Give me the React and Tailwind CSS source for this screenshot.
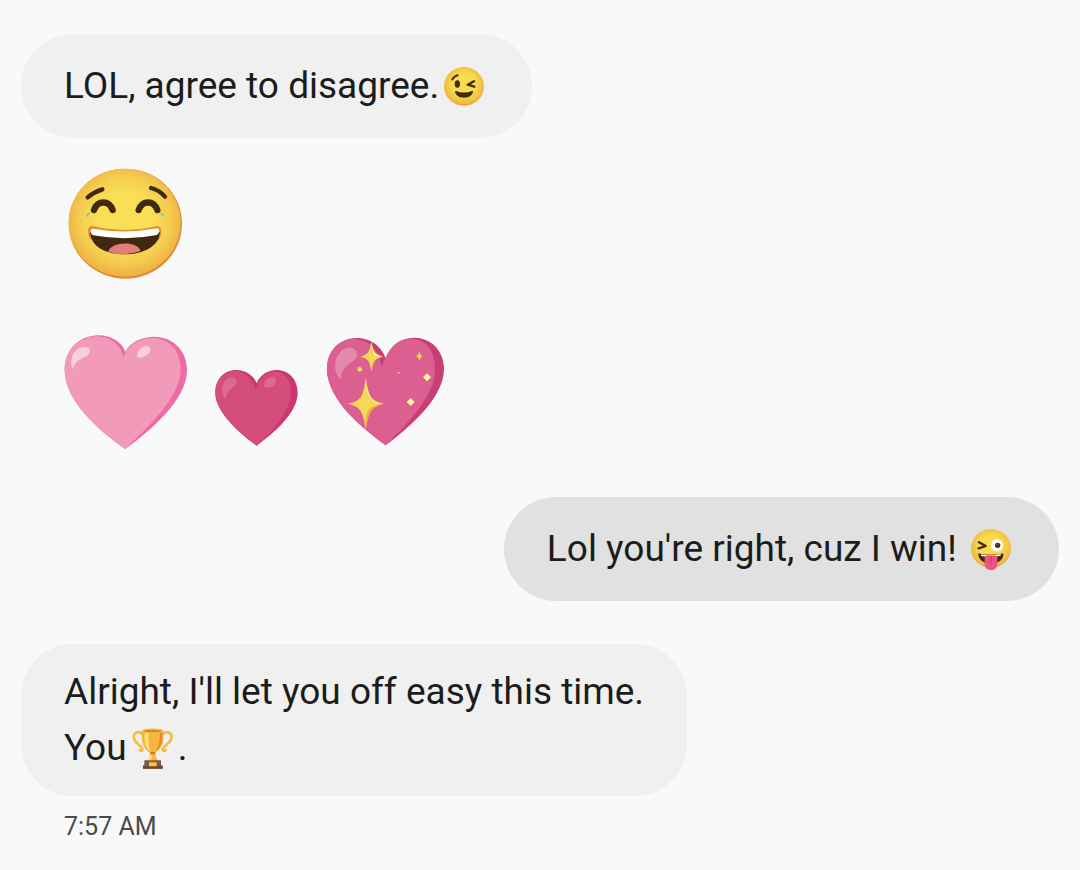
const messages = [
  { id: 1, from: "them", lines: [["LOL, agree to disagree.", <WinkFace key="e" />]] },
  { id: 2, from: "me", lines: [["Lol you're right, cuz I win! ", <ZanyFace key="e" />]] },
  { id: 3, from: "them", lines: [["Alright, I'll let you off easy this time."], ["You ", <Trophy key="e" />, "."]] },
];

export default function App() {
  return (
    <main className="flex min-h-screen flex-col bg-[#f9f9f9] px-[21px] pt-[34px] pb-6 font-[Roboto,sans-serif] text-[#1c1c1c]">
      <Bubble message={messages[0]} />

      <div className="mt-[30px] px-[47px]">
        <LaughFace />
      </div>
      <div className="mt-[54px] flex items-end gap-[27px] px-[43px]">
        <PinkHeart />
        <SmallHeart />
        <SparklingHeart />
      </div>

      <div className="mt-[47px] flex flex-col">
        <Bubble message={messages[1]} />
      </div>
      <div className="mt-[43px] flex flex-col">
        <Bubble message={messages[2]} />
      </div>
      <time className="mt-[13px] px-[43px] text-[25px] leading-9 text-[#4a4a4a]">7:57 AM</time>
    </main>
  );
}

function Bubble({ message }) {
  const side = message.from === "me" ? "self-end bg-[#e1e1e1]" : "self-start bg-[#f0f0f0]";
  const padding = message.lines.length > 1 ? "py-5" : "py-6";

  return (
    <div className={`rounded-[52px] px-[43px] text-[37px] leading-14 ${side} ${padding}`}>
      {message.lines.map((line, i) => (
        <p key={i} className="flex items-center whitespace-pre">{line}</p>
      ))}
    </div>
  );
}

function WinkFace() {
  return (
    <svg role="img" aria-label="winking face" viewBox="21 30 126 120" className="mx-1 h-10 w-[42px]">
      <defs>
        <radialGradient id="wink" cx="0.5" cy="0.45" r="0.55">
          <stop offset="0.5" stopColor="#f8dc50" />
          <stop offset="0.88" stopColor="#f1bd42" />
          <stop offset="1" stopColor="#e59c38" />
        </radialGradient>
      </defs>
      <ellipse cx="84" cy="91" rx="60" ry="58" fill="url(#wink)" />
      <ellipse cx="64" cy="84" rx="8" ry="11" fill="#422b0d" />
      <path d="M49 70 Q54 61 65 58" fill="none" stroke="#422b0d" strokeWidth="6" strokeLinecap="round" />
      <path d="M114 76 L95 86 L115 92" fill="none" stroke="#422b0d" strokeWidth="7" strokeLinecap="round" strokeLinejoin="round" />
      <path d="M60 105 Q84 114 108 105 C112 104 112 108 110 111 C104 122 95 125 84 125 C73 125 64 122 58 111 C57 107 58 104 60 105Z" fill="#422b0d" />
    </svg>
  );
}

function ZanyFace() {
  return (
    <svg role="img" aria-label="zany face" viewBox="30 30 126 129" className="mx-1 h-[43px] w-[42px]">
      <defs>
        <radialGradient id="zany" cx="0.5" cy="0.45" r="0.55">
          <stop offset="0.5" stopColor="#f8dc50" />
          <stop offset="0.88" stopColor="#f1bd42" />
          <stop offset="1" stopColor="#e59c38" />
        </radialGradient>
      </defs>
      <ellipse cx="93" cy="91" rx="60" ry="58" fill="url(#zany)" />
      <path d="M57 73 L77 84 L56 91" fill="none" stroke="#422b0d" strokeWidth="7" strokeLinecap="round" strokeLinejoin="round" />
      <circle cx="111" cy="82" r="18" fill="#fff" />
      <circle cx="113" cy="82" r="8" fill="#4a2f13" />
      <circle cx="110" cy="79" r="2" fill="#9b806a" />
      <path d="M55 106 Q92 115 130 106 C132 122 119 137 93 137 C68 137 53 122 55 106Z" fill="#422b0d" />
      <path d="M62 109 Q92 115 123 108 L121 113 Q92 120 64 114Z" fill="#fff" />
      <path d="M74 114 Q92 109 112 114 V137 C112 150 104 156 93 156 C82 156 74 150 74 137Z" fill="#ee5285" />
      <path d="M93 116 V136" stroke="#cf3b70" strokeWidth="3" strokeLinecap="round" />
    </svg>
  );
}

function Trophy() {
  return (
    <svg role="img" aria-label="trophy" viewBox="21 24 126 129" className="mr-1 -ml-1 h-[43px] w-[42px]">
      <path d="M56 48 C43 32 23 40 27 58 C30 74 47 77 52 89 C54 96 47 97 44 93 M110 48 C123 32 143 40 139 58 C136 74 119 77 114 89 C112 96 119 97 122 93" fill="none" stroke="#f7bd3c" strokeWidth="8" strokeLinecap="round" />
      <path d="M50 35 H115 C118 67 112 89 91 101 Q90 116 101 127 H65 Q76 116 75 101 C54 89 48 67 50 35Z" fill="#f9b43d" />
      <path d="M60 41 H71 C69 66 71 86 77 97 C61 86 57 67 60 41Z" fill="#fde47d" />
      <path d="M104 41 H112 C113 69 108 87 92 96 C102 82 105 61 104 41Z" fill="#e18b29" />
      <ellipse cx="83" cy="35" rx="33" ry="7" fill="#f9c84b" />
      <ellipse cx="83" cy="36" rx="27" ry="4" fill="#cf882d" />
      <path d="M76 99 H90 L91 106 H75Z" fill="#d87927" />
      <path d="M76 108 H81 Q82 119 75 125 H68 Q76 119 76 108Z" fill="#fde47d" />
      <path d="M58 124 H108 V139 H113 V149 H54 V139 H58Z" fill="#80594b" />
      <path d="M54 142 H113 V149 H54Z" fill="#684337" />
      <rect x="72" y="130" width="23" height="12" rx="2" fill="#fbc53b" />
    </svg>
  );
}

function LaughFace() {
  return (
    <svg role="img" aria-label="laughing face" viewBox="39 24 345 336" className="h-28 w-[115px]">
      <defs>
        <radialGradient id="laugh" cx="0.5" cy="0.47" r="0.54">
          <stop offset="0.45" stopColor="#f8df55" />
          <stop offset="0.72" stopColor="#f5cf50" />
          <stop offset="1" stopColor="#edaf43" />
        </radialGradient>
      </defs>
      <ellipse cx="211" cy="191" rx="170" ry="165" fill="#df8b33" />
      <ellipse cx="209" cy="188" rx="168" ry="162" fill="url(#laugh)" />
      <path d="M98 112 Q117 96 142 88 M288 84 Q314 91 330 110" fill="none" stroke="#3f2912" strokeWidth="13" strokeLinecap="round" />
      <path d="M117 150 C128 120 162 120 173 150 M251 150 C262 120 296 120 307 150" fill="none" stroke="#3f2912" strokeWidth="19" strokeLinecap="round" />
      <path d="M98 168 Q95 163 103 160 M324 168 Q327 164 319 161" fill="none" stroke="#71c5bd" strokeWidth="5" strokeLinecap="round" />
      <path d="M113 199 Q210 221 306 199 C326 199 320 230 311 240 Q210 265 106 238 C94 215 99 195 113 199Z" fill="#df8e32" />
      <path d="M106 216 C106 260 153 283 210 283 C266 283 315 257 314 216 Q210 250 106 216Z" fill="#3f2912" />
      <path d="M160 275 C168 244 247 242 257 273 Q210 291 160 275Z" fill="#e17d78" />
      <path d="M113 206 Q210 223 307 205 C315 206 314 219 306 225 Q210 244 115 226 C106 221 104 207 113 206Z" fill="#fff" />
    </svg>
  );
}

function PinkHeart() {
  return (
    <svg role="img" aria-label="pink heart" viewBox="27 27 372 348" className="h-[116px] w-[124px]">
      <path d="M211 372 C150 330 29 235 29 135 C29 75 72 31 130 31 C170 31 200 52 211 80 C225 52 260 35 298 35 C355 35 396 78 396 135 C396 225 285 318 211 372Z" fill="#ee6ca6" />
      <path d="M211 372 C150 330 29 235 29 135 C29 75 70 36 122 34 C168 34 198 62 205 96 C220 60 250 40 290 38 C345 40 377 80 377 132 C377 215 285 300 211 372Z" fill="#f19aba" />
      <path d="M53 132 C43 115 49 66 91 66 C107 66 108 80 99 90 C87 101 62 102 53 132Z" fill="#f5d1df" />
      <path d="M247 97 C243 83 258 64 274 63 C287 63 288 76 282 84 C274 93 257 102 247 97Z" fill="#f5d1df" />
    </svg>
  );
}

function SmallHeart() {
  return (
    <svg role="img" aria-label="small heart" viewBox="27 27 252 243" className="h-[81px] w-[84px]">
      <path d="M152 257 C109 225 28 160 28 98 C28 57 55 30 91 30 C121 30 144 48 152 70 C162 45 185 30 212 30 C249 30 275 59 275 98 C275 161 198 222 152 257Z" fill="#c93870" />
      <path d="M152 257 C109 225 28 160 28 98 C28 59 54 33 86 33 C121 34 142 62 149 92 C157 55 180 35 208 35 C240 35 256 64 255 98 C254 149 200 215 152 257Z" fill="#d44d7c" />
      <path d="M59 117 C45 105 42 70 66 56 C82 45 95 59 91 69 C82 86 62 88 59 117Z" fill="#dc6b92" />
      <path d="M175 81 C171 66 187 49 202 51 C214 53 212 68 203 76 C195 83 181 86 175 81Z" fill="#dc6b92" />
    </svg>
  );
}

function SparklingHeart() {
  return (
    <svg role="img" aria-label="sparkling heart" viewBox="33 36 357 339" className="h-[113px] w-[119px]">
      <path d="M212 361 C151 315 36 228 36 132 C36 76 76 39 126 39 C169 39 202 67 212 101 C224 63 256 38 298 38 C350 38 387 79 387 132 C387 221 279 310 212 361Z" fill="#c93e75" />
      <path d="M212 361 C151 315 36 228 36 132 C36 76 74 40 117 42 C165 44 190 77 200 125 C219 72 248 42 293 42 C337 44 360 83 360 132 C360 215 278 295 212 361Z" fill="#dc5f91" />
      <path d="M77 161 C60 154 50 106 78 79 C99 60 124 67 127 87 C126 116 84 108 77 161Z" fill="#e58aaa" />
      <path d="M169 49 C175 84 179 88 204 95 C179 101 176 106 169 139 C163 107 160 101 136 95 C161 88 163 82 169 49Z" fill="#f5d85a" />
      <path d="M169 49 C175 84 179 88 204 95 L180 92 Q171 83 169 49Z" fill="#fff39f" />
      <path d="M152 158 C161 219 169 228 207 236 C171 245 161 256 152 315 C145 257 135 245 99 236 C136 228 145 217 152 158Z" fill="#f5d85a" />
      <path d="M207 236 C171 245 161 256 152 315 L151 298 C155 249 165 241 207 236Z" fill="#e5b239" />
      <path d="M152 158 C161 219 169 228 207 236 C169 234 157 222 152 158Z" fill="#fff39f" />
      <circle cx="134" cy="133" r="7" fill="#f5d84e" />
      <path d="M313 79 Q315 91 323 94 Q315 97 313 109 Q311 97 303 94 Q311 91 313 79Z" fill="#f8d447" />
      <path d="M336 145 L348 157 L336 169 L324 157Z M287 219 L299 231 L287 243 L275 231Z" fill="#fff5a0" />
      <circle cx="251" cy="143" r="3" fill="#f7c5b2" />
    </svg>
  );
}
